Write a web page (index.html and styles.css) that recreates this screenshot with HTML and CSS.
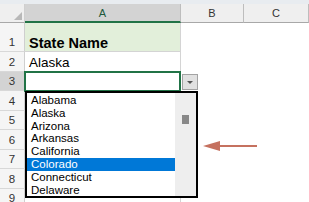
FILE: index.html
```html
<!DOCTYPE html>
<html lang="en">

<head>
    <meta charset="UTF-8">
    <meta name="viewport" content="width=device-width, initial-scale=1.0">
    <title>Drop-down list</title>
    <link rel="stylesheet" href="styles.css">
</head>

<body>
    <div class="window">
        <div class="topStrip"></div>
        <div class="sheet">
            <div class="corner"></div>
            <div class="colHead selected">A</div>
            <div class="colHead">B</div>
            <div class="colHead">C</div>

            <div class="rowHead">1</div>
            <div class="cell colA title">State Name</div>
            <div class="cell"></div>
            <div class="cell"></div>

            <div class="rowHead">2</div>
            <div class="cell colA">Alaska</div>
            <div class="cell"></div>
            <div class="cell"></div>

            <div class="rowHead selected">3</div>
            <div class="cell colA active"></div>
            <div class="cell"></div>
            <div class="cell"></div>

            <div class="rowHead">4</div>
            <div class="cell colA"></div>
            <div class="cell"></div>
            <div class="cell"></div>

            <div class="rowHead">5</div>
            <div class="cell colA"></div>
            <div class="cell"></div>
            <div class="cell"></div>

            <div class="rowHead">6</div>
            <div class="cell colA"></div>
            <div class="cell"></div>
            <div class="cell"></div>

            <div class="rowHead">7</div>
            <div class="cell colA"></div>
            <div class="cell"></div>
            <div class="cell"></div>

            <div class="rowHead">8</div>
            <div class="cell colA"></div>
            <div class="cell"></div>
            <div class="cell"></div>

            <div class="rowHead">9</div>
            <div class="cell colA"></div>
            <div class="cell"></div>
            <div class="cell"></div>
        </div>

        <!-- validation drop-down opened on A3 -->
        <div class="dropBtn"><span class="caret"></span></div>
        <div class="list">
            <ul class="items">
                <li>Alabama</li>
                <li>Alaska</li>
                <li>Arizona</li>
                <li>Arkansas</li>
                <li>California</li>
                <li class="picked">Colorado</li>
                <li>Connecticut</li>
                <li>Delaware</li>
            </ul>
            <div class="scrollbar">
                <div class="thumb"></div>
            </div>
        </div>

        <svg class="pointer" width="56" height="12" viewBox="0 0 56 12">
            <polygon points="0,6 17,1 17,11" fill="#c5715f" />
            <rect x="16" y="5" width="38" height="2" fill="#c5715f" />
        </svg>
    </div>
</body>

</html>
```

FILE: styles.css
```css
* {
    margin: 0;
    padding: 0;
    box-sizing: border-box;
}

body {
    width: 309px;
    height: 202px;
    overflow: hidden;
    background-color: #fff;
    font-family: "Liberation Sans", Arial, sans-serif;
}

.window {
    position: relative;
    width: 309px;
    height: 202px;
    overflow: hidden;
}

.topStrip {
    height: 4px;
    background-color: #e8ecf0;
}

.sheet {
    display: grid;
    grid-template-columns: 25px 156px 63px 65px;
    grid-template-rows: 19px 29px repeat(8, 19.5px);
}

.corner {
    position: relative;
    background-color: #efefef;
    border-right: 1px solid #cfcfcf;
    border-bottom: 1px solid #a8a8a8;
}

.corner::after {
    content: "";
    position: absolute;
    right: 2px;
    bottom: 2px;
    border-left: 8px solid transparent;
    border-bottom: 8px solid #b8b8b8;
}

.colHead {
    display: flex;
    justify-content: center;
    align-items: center;
    font-size: 11px;
    color: #333;
    background-color: #efefef;
    border-right: 1px solid #bdbdbd;
    border-bottom: 1px solid #a8a8a8;
}

.colHead.selected {
    background-color: #d3d3d3;
    color: #215a3c;
    border-bottom: 2px solid #217346;
}

.rowHead {
    display: flex;
    justify-content: center;
    align-items: flex-end;
    padding-bottom: 2px;
    font-size: 11.5px;
    line-height: 14px;
    color: #333;
    background-color: #f5f5f5;
    border-right: 1px solid #cfcfcf;
    border-bottom: 1px solid #d8d8d8;
}

.rowHead.selected {
    background-color: #d3d3d3;
}

.cell {
    display: flex;
    align-items: flex-end;
    padding-left: 4px;
    font-size: 13.5px;
    line-height: 16px;
    color: #000;
}

.colA {
    border-right: 1px solid #d4d4d4;
}

.title {
    font-weight: bold;
    font-size: 14.5px;
    background-color: #e2efda;
    border-bottom: 1px solid #d4d4d4;
}

.title + .cell + .cell + .rowHead + .colA {
    border-bottom: 1px solid #d4d4d4;
}

.active {
    position: relative;
}

.active::after {
    content: "";
    position: absolute;
    left: -1px;
    top: -1px;
    right: -1px;
    bottom: -1px;
    border: 2px solid #217346;
}

.dropBtn {
    position: absolute;
    left: 182px;
    top: 74px;
    width: 16px;
    height: 16px;
    display: flex;
    justify-content: center;
    align-items: center;
    background-color: #e1e1e1;
    border: 1px solid #a3a3a3;
}

.caret {
    border-left: 3px solid transparent;
    border-right: 3px solid transparent;
    border-top: 3px solid #555;
}

.list {
    position: absolute;
    left: 25px;
    top: 91px;
    width: 173px;
    height: 107px;
    display: flex;
    background-color: #fff;
    border: 2px solid #000;
}

.items {
    flex: 1;
    list-style: none;
    padding-top: 1px;
}

.items li {
    height: 12.8px;
    line-height: 12.8px;
    padding-left: 4px;
    font-size: 11.5px;
    color: #000;
}

.items li.picked {
    background-color: #0078d7;
    color: #fff;
}

.scrollbar {
    position: relative;
    width: 21px;
    background-color: #eeeeee;
}

.thumb {
    position: absolute;
    left: 7px;
    top: 22px;
    width: 7px;
    height: 9px;
    background-color: #888;
}

.pointer {
    position: absolute;
    left: 203px;
    top: 140px;
}
```
